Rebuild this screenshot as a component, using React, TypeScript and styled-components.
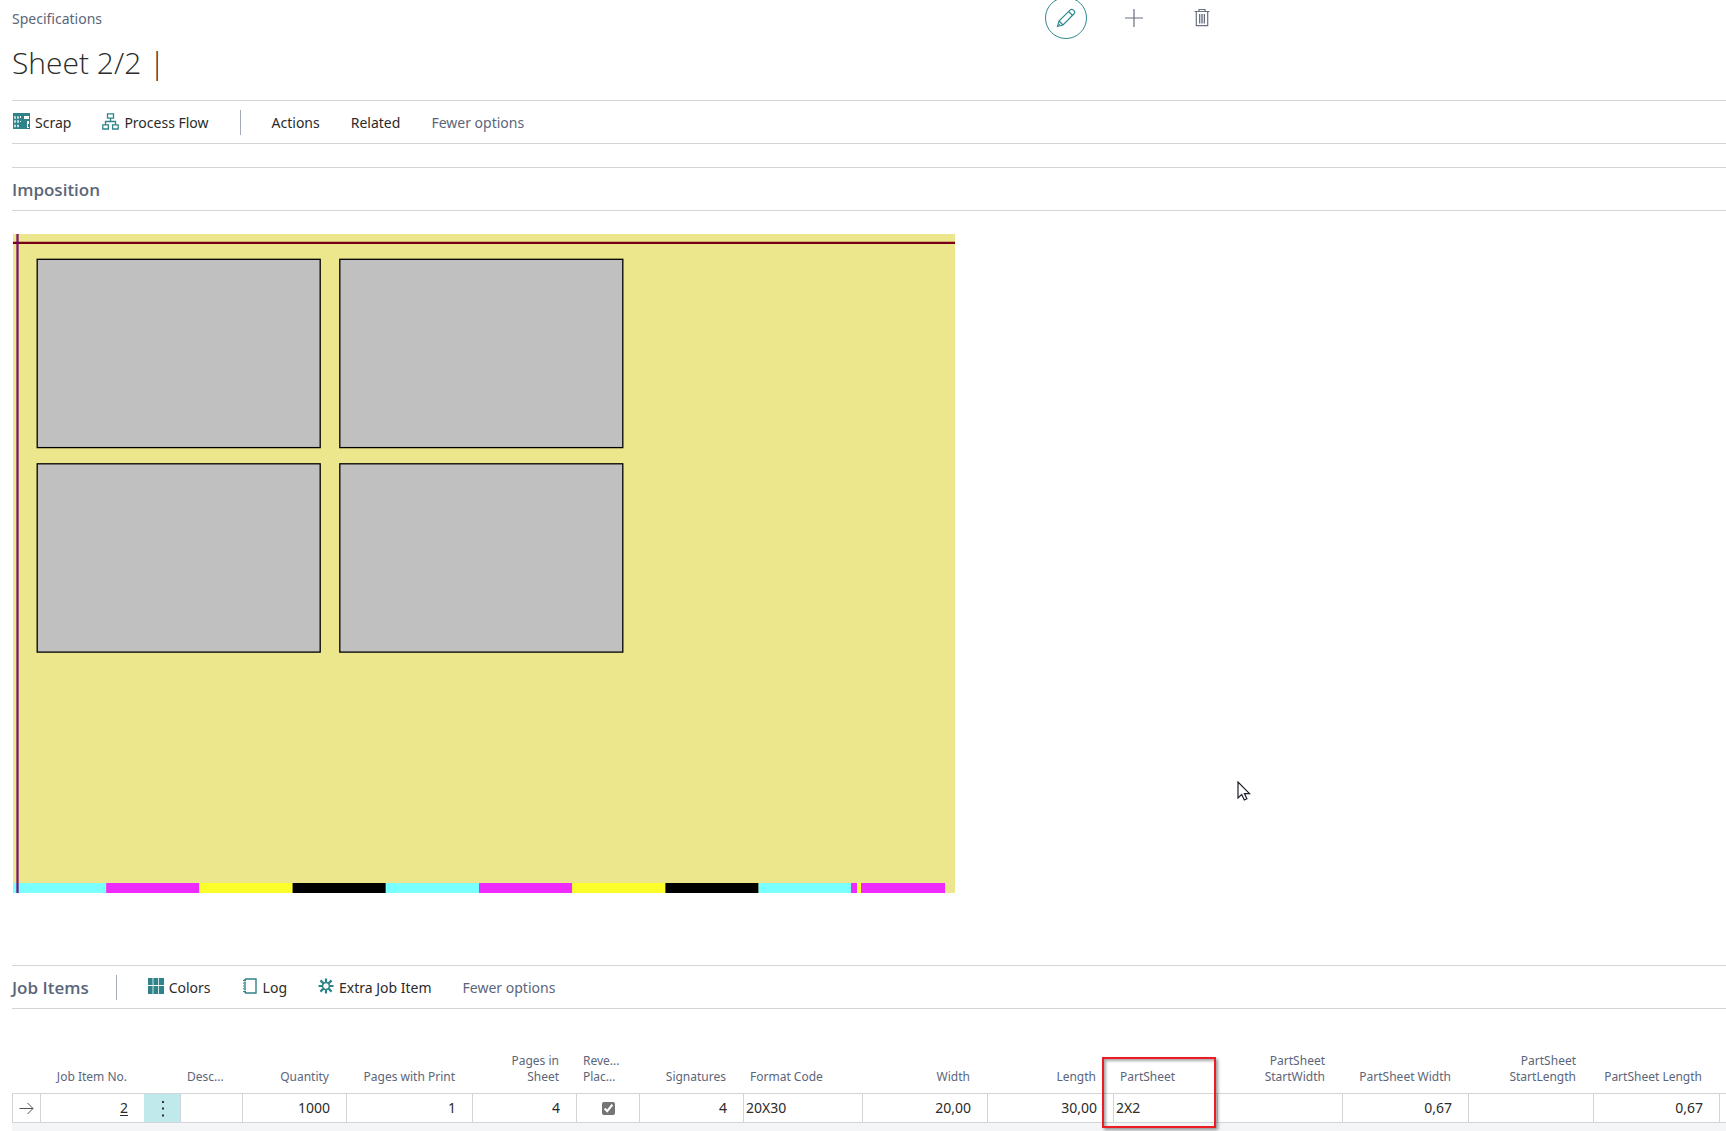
import React from "react";
import styled, { createGlobalStyle } from "styled-components";

const GlobalStyle = createGlobalStyle`
  * { box-sizing: border-box; }
  html { overflow: hidden; }
  body {
    margin: 0;
    background: #fff;
    color: #2b2b2b;
    font-family: "Noto Sans", "Open Sans", sans-serif;
    font-size: 14px;
    line-height: 20px;
  }
  button, input { font: inherit; color: inherit; }
`;

const Page = styled.main`
  padding-left: 12px;
`;

const Header = styled.header`
  display: grid;
  grid-template-columns: 1fr 681px;
  align-items: center;
  height: 42px;
  margin-top: -3px;
`;

const Crumb = styled.a`
  color: #5b667a;
  justify-self: start;
  padding-top: 2px;
  text-decoration: none;
`;

const HeaderActions = styled.div`
  display: flex;
  gap: 26px;
`;

const RoundButton = styled.button<{ $active?: boolean }>`
  display: grid;
  place-items: center;
  width: 42px;
  height: 42px;
  padding: 0;
  border: 1px solid ${(p) => (p.$active ? "#2f8a8e" : "transparent")};
  border-radius: 50%;
  background: none;
  color: ${(p) => (p.$active ? "#2f8a8e" : "#6b7080")};
`;

const Title = styled.h1`
  margin: 0 0 13px;
  font-family: "Open Sans", "Noto Sans", sans-serif;
  font-size: 30px;
  line-height: 48px;
  font-weight: 300;
`;

const Bar = styled.div`
  display: flex;
  align-items: center;
  gap: 31px;
  height: 44px;
  border: 0 solid #d2d5da;
  border-width: 1px 0;
`;

const Command = styled.button<{ $muted?: boolean }>`
  display: flex;
  align-items: center;
  gap: 5px;
  padding: 2px 0 0;
  border: 0;
  background: none;
  white-space: nowrap;
  line-height: 22px;
  color: ${(p) => (p.$muted ? "#5b667a" : "#2b2b2b")};

  svg {
    margin-bottom: 4px;
  }
`;

const Divider = styled.span`
  width: 1px;
  height: 25px;
  background: #a5abb5;
`;

const SectionTitle = styled.h2`
  margin: 0 -4px 0 0;
  padding-top: 2px;
  font-family: "Open Sans", "Noto Sans", sans-serif;
  font-size: 17px;
  line-height: 24px;
  font-weight: 600;
  color: #5b667a;
`;

const Imposition = styled.section`
  position: relative;
  margin-top: 23px;
`;

const Drawing = styled.svg`
  display: block;
  margin: 23px 0 0 1px;
`;

const Pointer = styled.svg`
  position: absolute;
  left: 1225px;
  top: 614px;
`;

const JobItems = styled.section`
  margin-top: 72px;
`;

const Table = styled.table`
  width: 100%;
  margin-top: 40px;
  table-layout: fixed;
  border-collapse: separate;
  border-spacing: 0;
`;

const Col = styled.col<{ $w?: number }>`
  width: ${(p) => (p.$w ? `${p.$w}px` : "auto")};
`;

const HeadCell = styled.th<{ $left?: boolean }>`
  position: relative;
  height: 44px;
  padding: 0 ${(p) => (p.$left ? 0 : 17)}px 8px 7px;
  vertical-align: bottom;
  text-align: ${(p) => (p.$left ? "left" : "right")};
  font-size: 12px;
  line-height: 16px;
  font-weight: 400;
  white-space: nowrap;
  color: #5b667a;
`;

const Cell = styled.td<{ $align?: "left" | "center" }>`
  height: 30px;
  padding: 0 ${(p) => (p.$align ? 0 : 16)}px 0 ${(p) => (p.$align === "left" ? 2 : 0)}px;
  border: 0 solid #d2d5da;
  border-width: 1px 0 1px 1px;
  text-align: ${(p) => p.$align ?? "right"};
`;

const MenuCell = styled(Cell)`
  background: #bfe9ea;
  border-left-color: #bfe9ea;
`;

const RowButton = styled.button`
  display: grid;
  place-items: center;
  width: 100%;
  height: 28px;
  padding: 0;
  border: 0;
  background: none;
`;

const ItemLink = styled.a`
  color: inherit;
  text-underline-offset: 2px;
`;

const Check = styled.input`
  display: block;
  width: 13px;
  height: 13px;
  margin: 0 auto;
  accent-color: #757575;
`;

const Strip = styled.div`
  height: 8px;
  background: #f4f5f7;
`;

const Highlight = styled.span`
  position: absolute;
  z-index: 1;
  left: -11px;
  top: 8px;
  width: 114px;
  height: 71px;
  border: 2px solid #ed1c24;
  box-shadow: 2px 2px 3px rgba(0, 0, 0, 0.4), inset 2px 2px 3px rgba(0, 0, 0, 0.35);
  pointer-events: none;
`;

const TEAL = "#2f8489";

const PencilIcon = () => (
  <svg width="20" height="20" viewBox="0 0 20 20" fill="none" stroke="currentColor" strokeWidth="1.2" aria-hidden="true">
    <path d="M1.5 18.5 3 13 14.2 1.9a2 2 0 0 1 2.9 0l1 1a2 2 0 0 1 0 2.9L7 17Z" />
    <path d="M3 13 7 17M12.6 3.5l4 4M3 16.2l.8.8" />
  </svg>
);

const PlusIcon = () => (
  <svg width="18" height="18" viewBox="0 0 18 18" stroke="currentColor" strokeWidth="1.2" aria-hidden="true">
    <path d="M9 0v18M0 9h18" />
  </svg>
);

const TrashIcon = () => (
  <svg width="16" height="20" viewBox="0 0 16 20" fill="none" stroke="currentColor" strokeWidth="1.2" aria-hidden="true">
    <path d="M.5 3.5h15M5 3.5v-2h6v2M2.3 3.5v14.2h11.4V3.5" />
    <path d="M5.5 6v9.5M7.2 6v9.5M8.8 6v9.5M10.5 6v9.5" strokeWidth="1" />
  </svg>
);

const ScrapIcon = () => (
  <svg width="18" height="16" viewBox="0 0 18 16" aria-hidden="true">
    <path d="M1 0h17v16H1z" fill={TEAL} />
    <g fill="none" stroke="#e3f1f1" strokeWidth=".8">
      <path d="M2.5 3.5h1v2h-1zM5.5 3.5h1v2h-1zM2.5 7.5h1v2h-1zM5.5 7.5h1v2h-1zM2.5 12h1v2h-1zM5.5 12h1v2h-1z" />
    </g>
    <path d="M12 3h5v3h-5zM15 8h2v3h-1v3h1v1h-2zM8 3h1v2H8zM8 8h1v1H8z" fill="#fff" />
  </svg>
);

const FlowIcon = () => (
  <svg width="17" height="17" viewBox="0 0 17 17" fill="none" stroke={TEAL} strokeWidth="1.3" aria-hidden="true">
    <path d="M5.5.8h6v4.4h-6zM.8 11.8h5.6V16H.8zM10.6 11.8h5.6V16h-5.6zM8.5 5.2v3.3M3.5 11.8V8.5h10v3.3" />
  </svg>
);

const ColorsIcon = () => (
  <svg width="16" height="16" viewBox="0 0 16 16" fill={TEAL} aria-hidden="true">
    <path d="M0 0h4.6v7H0zM5.4 0h4.6v7H5.4zM10.8 0H16v7h-5.2zM0 8h4.6v8H0zM5.4 8h4.6v8H5.4zM10.8 8H16v8h-5.2z" />
  </svg>
);

const LogIcon = () => (
  <svg width="16" height="16" viewBox="0 0 16 16" fill="none" stroke={TEAL} strokeWidth="1.4" aria-hidden="true">
    <path d="M3 1h11v14H3" />
    <path d="M3 1v14" strokeDasharray="1.5 1" />
    <path d="M1 2.5h3M1 5.2h3M1 8h3M1 10.8h3M1 13.5h3" strokeWidth="1" />
  </svg>
);

const SparkIcon = () => (
  <svg width="16" height="16" viewBox="0 0 16 16" fill="none" stroke={TEAL} strokeWidth="2.2" aria-hidden="true">
    <circle cx="8" cy="8" r="3.4" strokeWidth="1.5" />
    <path d="M8 .5V5M8 11v4.5M.5 8H5M11 8h4.5M2.4 2.4 5.9 5.9M10.1 10.1l3.5 3.5M13.6 2.4l-3.5 3.5M5.9 10.1l-3.5 3.5" />
  </svg>
);

const ArrowIcon = () => (
  <svg width="15" height="13" viewBox="0 0 15 13" fill="none" stroke="#555" aria-hidden="true">
    <path d="M.5 6.5h13.5M8.5 1 14 6.5 8.5 12" />
  </svg>
);

const DotsIcon = () => (
  <svg width="4" height="17" viewBox="0 0 4 17" fill="#333" aria-hidden="true">
    <path d="M1 1h2v2H1zM1 7.5h2v2H1zM1 14.5h2v2H1z" />
  </svg>
);

const INKS = ["#7affff", "#ee2aff", "#fcff2a", "#000000"];
const PATCH = 93.2;

const SheetDrawing = () => (
  <Drawing width="942" height="659" viewBox="0 0 942 659" role="img" aria-label="Imposition of the sheet">
    <rect width="942" height="659" fill="#ece68d" />
    {Array.from({ length: 9 }, (_, i) => (
      <rect key={i} x={i * PATCH} y="649" width={PATCH} height="10" fill={INKS[i % 4]} />
    ))}
    <rect x="838" y="649" width="6" height="10" fill={INKS[1]} />
    <rect x="844" y="649" width="4" height="10" fill={INKS[2]} />
    <rect x="848" y="649" width="84" height="10" fill={INKS[1]} />
    {[24.2, 326.8].map((x) =>
      [25.3, 229.8].map((y) => (
        <rect key={`${x}-${y}`} x={x} y={y} width="283" height="188.3" fill="#c0c0c0" stroke="#000" strokeWidth="1.3" />
      ))
    )}
    <path d="M0 8.9h942" stroke="#780014" strokeWidth="2.2" />
    <path d="M4.5 0v659" stroke="#700070" strokeWidth="2.3" opacity="0.9" />
  </Drawing>
);

type Column = { w: number; head: React.ReactNode; value?: string; left?: boolean; mark?: boolean };

const COLUMNS: Column[] = [
  { w: 62, head: "Desc...", left: true },
  { w: 104, head: "Quantity", value: "1000" },
  { w: 126, head: "Pages with Print", value: "1" },
  { w: 104, head: <>Pages in<br />Sheet</>, value: "4" },
  { w: 63, head: <>Reve...<br />Plac...</>, value: "check", left: true },
  { w: 104, head: "Signatures", value: "4" },
  { w: 119, head: "Format Code", value: "20X30", left: true },
  { w: 125, head: "Width", value: "20,00" },
  { w: 126, head: "Length", value: "30,00" },
  { w: 104, head: "PartSheet", value: "2X2", left: true, mark: true },
  { w: 125, head: <>PartSheet<br />StartWidth</> },
  { w: 126, head: "PartSheet Width", value: "0,67" },
  { w: 125, head: <>PartSheet<br />StartLength</> },
  { w: 126, head: "PartSheet Length", value: "0,67" },
];

export default function App() {
  return (
    <>
      <GlobalStyle />
      <Page>
        <Header>
          <Crumb href="#specifications">Specifications</Crumb>
          <HeaderActions>
            <RoundButton $active aria-label="Edit"><PencilIcon /></RoundButton>
            <RoundButton aria-label="New"><PlusIcon /></RoundButton>
            <RoundButton aria-label="Delete"><TrashIcon /></RoundButton>
          </HeaderActions>
        </Header>
        <Title>Sheet 2/2 |</Title>
        <Bar>
          <Command><ScrapIcon />Scrap</Command>
          <Command><FlowIcon />Process Flow</Command>
          <Divider />
          <Command>Actions</Command>
          <Command>Related</Command>
          <Command $muted>Fewer options</Command>
        </Bar>

        <Imposition>
          <Bar><SectionTitle>Imposition</SectionTitle></Bar>
          <SheetDrawing />
          <Pointer width="14" height="20" viewBox="0 0 14 20" aria-hidden="true">
            <path d="M1 1v16l3.7-3.4L7.3 19l2.6-1.2-2.5-5.2H12.5Z" fill="#fff" stroke="#1b1b2b" strokeWidth="1.2" />
          </Pointer>
        </Imposition>

        <JobItems>
          <Bar>
            <SectionTitle>Job Items</SectionTitle>
            <Divider />
            <Command><ColorsIcon />Colors</Command>
            <Command><LogIcon />Log</Command>
            <Command><SparkIcon />Extra Job Item</Command>
            <Command $muted>Fewer options</Command>
          </Bar>
          <Table>
            <colgroup>
              <Col $w={28} />
              <Col $w={104} />
              <Col $w={36} />
              {COLUMNS.map((c, i) => <Col key={i} $w={c.w} />)}
              <Col />
            </colgroup>
            <thead>
              <tr>
                <HeadCell />
                <HeadCell>Job Item No.</HeadCell>
                <HeadCell />
                {COLUMNS.map((c, i) => (
                  <HeadCell key={i} $left={c.left}>
                    {c.head}
                    {c.mark && <Highlight />}
                  </HeadCell>
                ))}
                <HeadCell $left />
              </tr>
            </thead>
            <tbody>
              <tr>
                <Cell $align="center"><RowButton aria-label="Select row"><ArrowIcon /></RowButton></Cell>
                <Cell><ItemLink href="#item-2">2</ItemLink></Cell>
                <MenuCell $align="center"><RowButton aria-label="Row menu"><DotsIcon /></RowButton></MenuCell>
                {COLUMNS.map((c, i) =>
                  c.value === "check" ? (
                    <Cell key={i} $align="center"><Check type="checkbox" defaultChecked aria-label="Reverse placement" /></Cell>
                  ) : (
                    <Cell key={i} $align={c.left ? "left" : undefined}>{c.value}</Cell>
                  )
                )}
                <Cell $align="left" />
              </tr>
            </tbody>
          </Table>
          <Strip />
        </JobItems>
      </Page>
    </>
  );
}
